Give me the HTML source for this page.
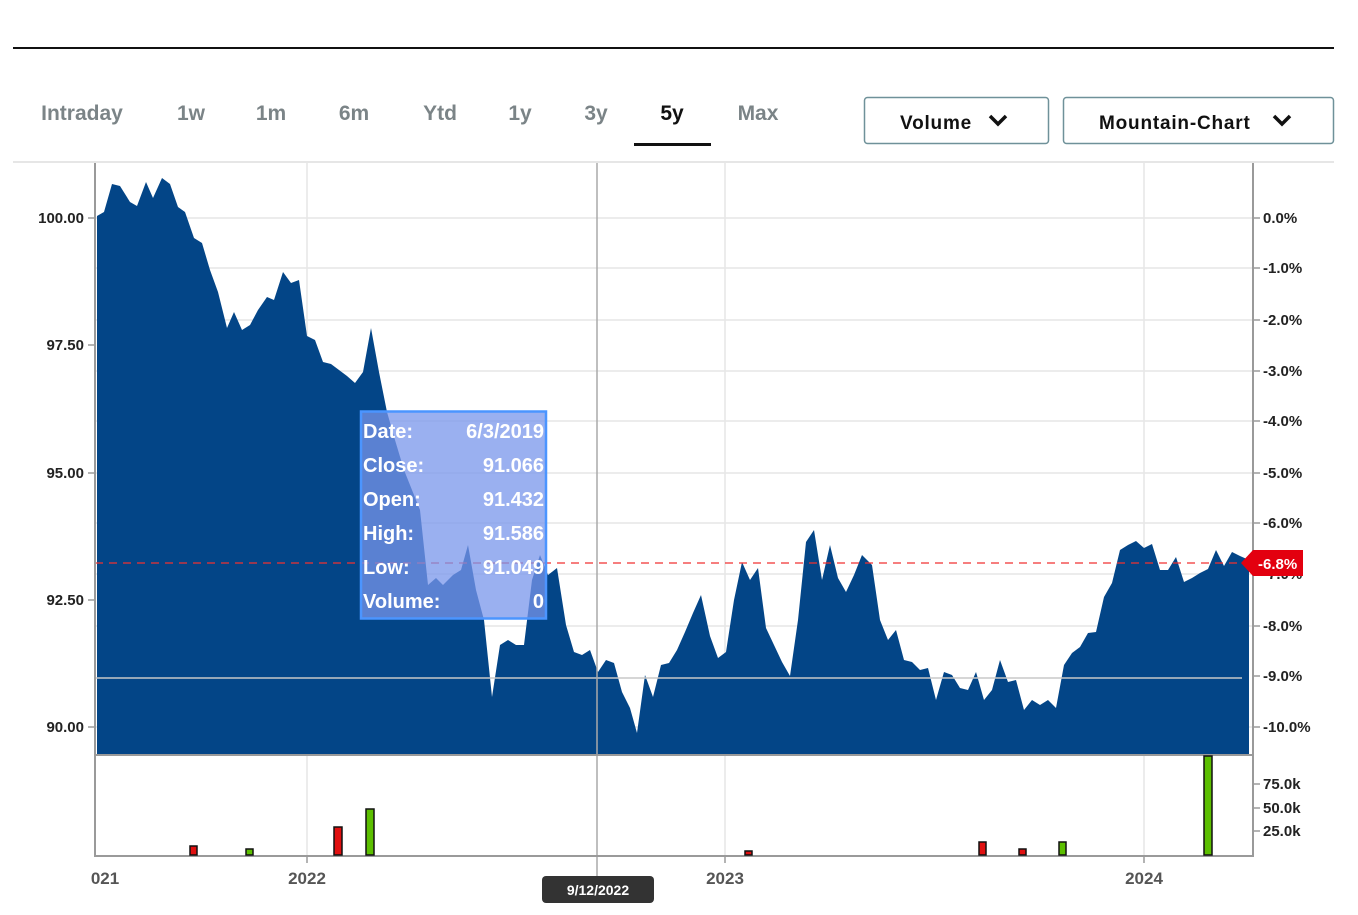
<!DOCTYPE html>
<html><head><meta charset="utf-8"><style>
html,body{margin:0;padding:0;background:#fff;width:1358px;height:915px;overflow:hidden}
svg{display:block;font-family:"Liberation Sans",sans-serif}
</style></head><body>
<svg width="1358" height="915" viewBox="0 0 1358 915" xmlns="http://www.w3.org/2000/svg">
<rect x="13" y="47" width="1321" height="2" fill="#111"/>
<g font-size="21" font-weight="bold" fill="#7b8487" text-anchor="middle">
<text x="82" y="120">Intraday</text><text x="191" y="120">1w</text><text x="271" y="120">1m</text>
<text x="354" y="120">6m</text><text x="440" y="120">Ytd</text><text x="520" y="120">1y</text>
<text x="596" y="120">3y</text><text x="672" y="120" fill="#111">5y</text><text x="758" y="120">Max</text>
</g>
<rect x="634" y="143" width="77" height="3" fill="#111"/>
<rect x="864.5" y="97.5" width="184" height="46" rx="3" fill="#fff" stroke="#6f9199" stroke-width="1.5"/>
<rect x="1063.5" y="97.5" width="270" height="46" rx="3" fill="#fff" stroke="#6f9199" stroke-width="1.5"/>
<g font-size="19" font-weight="bold" fill="#111" letter-spacing="0.8">
<text x="900" y="129">Volume</text><text x="1099" y="129">Mountain-Chart</text></g>
<path d="M990 116l8 8 8-8M1274 116l8 8 8-8" fill="none" stroke="#111" stroke-width="3.5"/>
<rect x="13" y="161" width="1321" height="2" fill="#e6e6e6"/>
<g stroke="#e6e6e6" stroke-width="1.5">
<line x1="95" y1="218" x2="1253" y2="218"/><line x1="95" y1="268" x2="1253" y2="268"/><line x1="95" y1="320" x2="1253" y2="320"/>
<line x1="95" y1="371" x2="1253" y2="371"/><line x1="95" y1="421" x2="1253" y2="421"/><line x1="95" y1="473" x2="1253" y2="473"/>
<line x1="95" y1="523" x2="1253" y2="523"/><line x1="95" y1="574" x2="1253" y2="574"/><line x1="95" y1="626" x2="1253" y2="626"/>
<line x1="95" y1="727" x2="1253" y2="727"/>
<line x1="307" y1="163" x2="307" y2="855"/><line x1="725" y1="163" x2="725" y2="855"/><line x1="1144" y1="163" x2="1144" y2="855"/>
</g>
<polygon fill="#034587" points="97,755 97,216 104,212 112,184 120,186 130,202 137,206 146,182 153,198 162,178 170,184 178,207 185,212 194,238 202,243 210,270 218,292 227,328 234,312 242,330 250,325 258,310 267,297 274,300 283,272 291,283 299,280 307,336 315,340 323,362 331,364 339,370 347,376 355,383 363,372 371,328 379,372 387,412 395,440 404,470 412,490 420,510 428,585 436,578 443,585 453,575 461,570 468,545 476,590 484,620 492,697 500,645 508,640 516,645 524,645 532,580 540,555 548,575 557,568 566,625 574,652 582,655 590,650 598,672 606,660 614,663 622,692 630,708 637,733 645,675 653,697 661,665 669,663 677,650 685,632 693,613 701,595 710,636 718,658 726,652 734,600 742,562 750,580 758,568 766,628 774,645 782,662 790,676 798,620 806,542 814,530 822,580 830,545 838,578 846,592 854,575 862,555 872,565 880,620 888,640 896,630 904,660 912,662 920,670 928,668 936,700 944,672 952,675 960,688 968,690 976,672 984,700 992,690 1000,660 1008,682 1016,680 1024,710 1032,700 1040,705 1048,700 1056,708 1064,665 1072,653 1080,647 1088,633 1096,632 1104,597 1112,583 1120,550 1128,545 1136,541 1144,548 1152,544 1160,570 1168,570 1176,557 1184,582 1192,578 1200,573 1208,569 1216,550 1224,566 1232,552 1240,556 1249,560 1249,755"/>
<line x1="95" y1="678" x2="1242" y2="678" stroke="#c8c8c8" stroke-width="1.5"/>
<line x1="95" y1="563" x2="1250" y2="563" stroke="#f03030" stroke-width="1.3" stroke-dasharray="8,6"/>
<line x1="597" y1="163" x2="597" y2="876" stroke="#aaa" stroke-width="1.5"/>
<g stroke="#9a9a9a" stroke-width="2" fill="none">
<path d="M95 163V856H1253V163"/><line x1="95" y1="755" x2="1253" y2="755"/>
</g>
<g stroke="#111" stroke-width="1.5">
<rect x="190" y="846" width="7" height="9" fill="#e01010"/><rect x="246" y="849" width="7" height="6" fill="#5cbf00"/>
<rect x="334" y="827" width="8" height="28" fill="#e01010"/><rect x="366" y="809" width="8" height="46" fill="#5cbf00"/>
<rect x="745" y="851" width="7" height="4" fill="#e01010"/><rect x="979" y="842" width="7" height="13" fill="#e01010"/>
<rect x="1019" y="849" width="7" height="6" fill="#e01010"/><rect x="1059" y="842" width="7" height="13" fill="#5cbf00"/>
<rect x="1204" y="756" width="8" height="99" fill="#5cbf00"/>
</g>
<g font-size="15" font-weight="bold" fill="#222" text-anchor="end">
<text x="84" y="223">100.00</text><text x="84" y="350">97.50</text><text x="84" y="478">95.00</text>
<text x="84" y="605">92.50</text><text x="84" y="732">90.00</text></g>
<g stroke="#9a9a9a" stroke-width="1.5">
<line x1="88" y1="218" x2="95" y2="218"/><line x1="88" y1="345" x2="95" y2="345"/><line x1="88" y1="473" x2="95" y2="473"/><line x1="88" y1="600" x2="95" y2="600"/><line x1="88" y1="727" x2="95" y2="727"/>
<line x1="1253" y1="218" x2="1260" y2="218"/><line x1="1253" y1="268" x2="1260" y2="268"/><line x1="1253" y1="320" x2="1260" y2="320"/><line x1="1253" y1="371" x2="1260" y2="371"/><line x1="1253" y1="421" x2="1260" y2="421"/><line x1="1253" y1="473" x2="1260" y2="473"/><line x1="1253" y1="523" x2="1260" y2="523"/><line x1="1253" y1="574" x2="1260" y2="574"/><line x1="1253" y1="626" x2="1260" y2="626"/><line x1="1253" y1="676" x2="1260" y2="676"/><line x1="1253" y1="727" x2="1260" y2="727"/>
<line x1="1253" y1="784" x2="1260" y2="784"/><line x1="1253" y1="808" x2="1260" y2="808"/><line x1="1253" y1="831" x2="1260" y2="831"/>
<line x1="307" y1="856" x2="307" y2="863"/><line x1="725" y1="856" x2="725" y2="863"/><line x1="1144" y1="856" x2="1144" y2="863"/>
</g>
<g font-size="15" font-weight="bold" fill="#222">
<text x="1263" y="223">0.0%</text><text x="1263" y="273">-1.0%</text><text x="1263" y="325">-2.0%</text><text x="1263" y="376">-3.0%</text>
<text x="1263" y="426">-4.0%</text><text x="1263" y="478">-5.0%</text><text x="1263" y="528">-6.0%</text><text x="1263" y="579">-7.0%</text>
<text x="1263" y="631">-8.0%</text><text x="1263" y="681">-9.0%</text><text x="1263" y="732">-10.0%</text>
<text x="1263" y="789">75.0k</text><text x="1263" y="813">50.0k</text><text x="1263" y="836">25.0k</text></g>
<path d="M1241 563l12-13h50v26h-50z" fill="#e3000f"/>
<text x="1258" y="569" font-size="15" font-weight="bold" fill="#fff">-6.8%</text>
<g font-size="17" font-weight="bold" fill="#555" text-anchor="middle">
<text x="105" y="884">021</text><text x="307" y="884">2022</text><text x="725" y="884">2023</text><text x="1144" y="884">2024</text></g>
<rect x="542" y="876" width="112" height="27" rx="4" fill="#333"/>
<text x="598" y="895" font-size="14" font-weight="bold" fill="#fff" text-anchor="middle">9/12/2022</text>
<rect x="361" y="411.5" width="185" height="207" fill="rgba(120,150,235,0.75)" stroke="#4b95ff" stroke-width="2.5"/>
<g font-size="20" font-weight="bold" fill="#fff">
<text x="363" y="438">Date:</text><text x="363" y="472">Close:</text><text x="363" y="506">Open:</text>
<text x="363" y="540">High:</text><text x="363" y="574">Low:</text><text x="363" y="608">Volume:</text></g>
<g font-size="20" font-weight="bold" fill="#fff" text-anchor="end">
<text x="544" y="438">6/3/2019</text><text x="544" y="472">91.066</text><text x="544" y="506">91.432</text>
<text x="544" y="540">91.586</text><text x="544" y="574">91.049</text><text x="544" y="608">0</text></g>
</svg>
</body></html>
